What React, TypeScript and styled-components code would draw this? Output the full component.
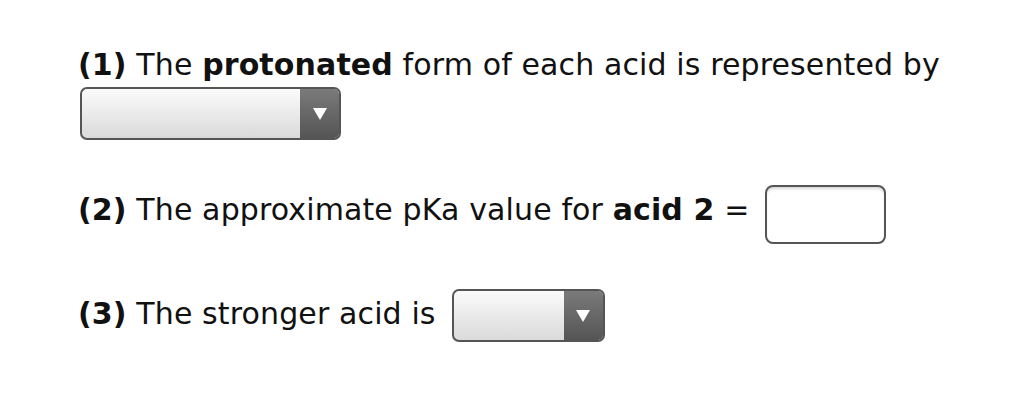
import React from "react";
import styled, { createGlobalStyle } from "styled-components";

const Global = createGlobalStyle`
  html, body { margin: 0; padding: 0; background: #fff; }
  body { font-family: "DejaVu Sans", Verdana, sans-serif; color: #111; }
`;

const Page = styled.div`
  padding: 45px 0 0 78px;
  display: flex;
  flex-direction: column;
  font-size: 30px;
  letter-spacing: 0.12px;
`;

const Question = styled.div<{ $mt?: number }>`
  display: flex;
  align-items: flex-start;
  column-gap: 16px;
  margin-top: ${(p) => p.$mt ?? 0}px;
`;

const Line = styled.div<{ $offset?: number }>`
  line-height: 40px;
  white-space: nowrap;
  margin-top: ${(p) => p.$offset ?? 0}px;
`;

const Select = styled.div<{ $w: number; $ml?: number }>`
  box-sizing: border-box;
  width: ${(p) => p.$w}px;
  height: 53px;
  margin-left: ${(p) => p.$ml ?? 0}px;
  border: 2px solid #555;
  border-radius: 7px;
  display: flex;
  overflow: hidden;
  background: linear-gradient(#fbfbfb, #dadada);
`;

const SelectField = styled.div`
  flex: 1;
`;

const SelectButton = styled.div`
  width: 39px;
  background: linear-gradient(#7a7a7a, #555);
  display: flex;
  align-items: center;
  justify-content: center;
`;

const Input = styled.div`
  box-sizing: border-box;
  width: 121px;
  height: 59px;
  border: 2px solid #555;
  border-radius: 8px;
  background: #fff;
  box-shadow: inset 0 3px 3px -1px #d8d8d8;
`;

const Triangle = () => (
  <svg width="14" height="12" viewBox="0 0 14 12">
    <polygon points="0,0 14,0 7,12" fill="#fff" />
  </svg>
);

export default function App() {
  return (
    <>
      <Global />
      <Page>
        <Question>
          <Line>
            <b>(1)</b> The <b>protonated</b> form of each acid is represented by
          </Line>
        </Question>
        <Question $mt={2}>
          <Select $w={261} $ml={2}>
            <SelectField />
            <SelectButton>
              <Triangle />
            </SelectButton>
          </Select>
        </Question>
        <Question $mt={45}>
          <Line $offset={5}>
            <b>(2)</b> The approximate pKa value for <b>acid 2</b> =
          </Line>
          <Input />
        </Question>
        <Question $mt={45}>
          <Line $offset={5}>
            <b>(3)</b> The stronger acid is
          </Line>
          <Select $w={153}>
            <SelectField />
            <SelectButton>
              <Triangle />
            </SelectButton>
          </Select>
        </Question>
      </Page>
    </>
  );
}
